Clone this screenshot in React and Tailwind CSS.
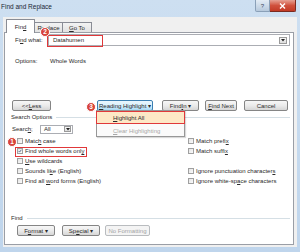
import React from "react";

const U = ({ children }) => <span className="underline underline-offset-[1px] decoration-[0.5px]">{children}</span>;

function Btn({ children, className = "" }) {
  return (
    <div className={"h-[11px] flex items-center justify-center rounded-[2px] border border-[#858585] bg-linear-to-b from-[#f7f7f7] via-[#ebebeb] to-[#d6d6d6] text-[6px] text-[#2a2a2a] " + className}>
      {children}
    </div>
  );
}

function Check({ checked, label }) {
  return (
    <div className="h-[10px] flex items-center">
      <div className="w-[6px] h-[6px] border border-[#a0a0a0] bg-linear-to-br from-[#e4e4e4] to-[#fbfbfb] flex items-center justify-center">
        {checked && (
          <svg width="6" height="6" viewBox="0 0 6 6">
            <path d="M1 3.2 L2.4 4.6 L5 1.2" stroke="#1f3b6b" strokeWidth="1" fill="none" />
          </svg>
        )}
      </div>
      <div className="ml-[2px] whitespace-nowrap">{label}</div>
    </div>
  );
}

function Badge({ n, className }) {
  return (
    <div className={"absolute rounded-full bg-[#d8433b] border border-white text-white text-[6.5px] font-bold flex items-center justify-center " + className}>
      {n}
    </div>
  );
}

export default function App() {
  return (
    <div className="relative w-[300px] h-[252px] overflow-hidden bg-linear-to-b from-[#cddff1] to-[#bfd5ec] font-['Liberation_Sans',Arial,sans-serif] text-[6px] leading-none text-[#2a2a2a]">
      {/* Title bar */}
      <div className="h-[17px] flex items-start">
        <div className="pl-[1px] pt-[3px] text-[6.5px] leading-[8px] text-[#1b2635]">Find and Replace</div>
        <div className="ml-auto mr-[4px] flex">
          <div className="w-[15px] h-[12px] rounded-bl-[2px] border border-[#8aa0b8] border-t-0 bg-linear-to-b from-[#e3ecf5] to-[#b7c9dc] flex items-center justify-center text-[6px] text-[#3a4a5c]">?</div>
          <div className="w-[26px] h-[12px] rounded-br-[2px] border border-[#7a2a20] border-t-0 border-l-0 bg-linear-to-b from-[#e5a093] via-[#d0513d] to-[#c23a25] flex items-center justify-center">
            <svg width="7" height="6" viewBox="0 0 7 6">
              <path d="M1 0.5 L6 5.5 M6 0.5 L1 5.5" stroke="white" strokeWidth="1.4" />
            </svg>
          </div>
        </div>
      </div>

      {/* Body */}
      <div className="mx-[3px] h-[230px] bg-[#f0f0f0] flex flex-col">
        {/* Tabs */}
        <div className="h-[15px] flex items-end pl-[3px]">
          <div className="relative z-10 -mb-px w-[29px] h-[14px] bg-white border border-b-0 border-[#898c95] rounded-t-[1px] flex items-center justify-center pt-[1px]">
            Fin<U>d</U>
          </div>
          <div className="w-[28px] h-[10px] bg-linear-to-b from-[#f3f3f3] to-[#e2e2e2] border border-b-0 border-l-0 border-[#898c95] flex items-center justify-center">
            Re<U>p</U>lace
          </div>
          <div className="w-[29px] h-[10px] bg-linear-to-b from-[#f3f3f3] to-[#e2e2e2] border border-b-0 border-l-0 border-[#898c95] flex items-center justify-center">
            <U>G</U>o To
          </div>
        </div>

        {/* Panel */}
        <div className="ml-[1px] mr-[3px] h-[213px] bg-white border border-[#9a9ea6] flex flex-col">
          {/* Find what */}
          <div className="mt-[1px] h-[12px] flex items-center pl-[10px]">
            <div className="w-[33px]">Fi<U>n</U>d what:</div>
            <div className="w-[242px] h-[12px] border border-[#abadb3] flex items-center pl-[4px]">
              <span>Datahumen</span>
              <div className="ml-auto mr-[2px] w-[8px] h-[7px] border border-[#9a9a9a] bg-linear-to-b from-[#f6f6f6] to-[#dedede] flex items-center justify-center">
                <svg width="4" height="3" viewBox="0 0 4 3"><path d="M0 0 L4 0 L2 2.5 Z" fill="#222" /></svg>
              </div>
            </div>
          </div>

          {/* Options */}
          <div className="mt-[11px] h-[8px] flex items-center pl-[10px]">
            <div className="w-[35px]">Options:</div>
            <div>Whole Words</div>
          </div>

          {/* Buttons */}
          <div className="mt-[35px] h-[11px] flex pl-[7px]">
            <Btn className="w-[39px]">&lt;&lt; <U>L</U>ess</Btn>
            <div className="ml-[46px] w-[56px] h-[11px] flex items-center justify-center rounded-[2px] border border-[#3c7fb1] bg-linear-to-b from-[#eaf6fd] via-[#d9f0fc] to-[#a7d9f5]">
              <U>R</U>eading Highlight ▾
            </div>
            <Btn className="ml-[9px] w-[37px]">Find <U>I</U>n ▾</Btn>
            <Btn className="ml-[6px] w-[32px]"><U>F</U>ind Next</Btn>
            <Btn className="ml-[7px] w-[44px]">Cancel</Btn>
          </div>

          {/* Search Options */}
          <div className="mt-[2px] h-[8px] flex items-center pl-[6px]">
            <div className="whitespace-nowrap">Search Options</div>
            <div className="flex-1 ml-[4px] mr-[3px] h-px bg-[#d5dfe5]" />
          </div>

          {/* Search */}
          <div className="mt-[3px] h-[10px] flex items-center pl-[7px]">
            <div className="w-[28px]">Searc<U>h</U>;</div>
            <div className="w-[33px] h-[9px] border border-[#abadb3] flex items-center pl-[3px]">
              <span>All</span>
              <div className="ml-auto mr-[1px] w-[7px] h-[6px] border border-[#9a9a9a] bg-linear-to-b from-[#f6f6f6] to-[#dedede] flex items-center justify-center">
                <svg width="4" height="3" viewBox="0 0 4 3"><path d="M0 0 L4 0 L2 2.5 Z" fill="#222" /></svg>
              </div>
            </div>
          </div>

          {/* Checkboxes */}
          <div className="mt-[2px] flex">
            <div className="w-[183px] pl-[12px] flex flex-col">
              <Check label={<>Matc<U>h</U> case</>} />
              <Check checked label={<>Find whole words onl<U>y</U></>} />
              <Check label={<><U>U</U>se wildcards</>} />
              <Check label={<>Sounds li<U>k</U>e (English)</>} />
              <Check label={<>Find all <U>w</U>ord forms (English)</>} />
            </div>
            <div className="flex flex-col">
              <Check label={<>Match prefi<U>x</U></>} />
              <Check label={<>Match suffi<U>x</U></>} />
              <div className="h-[10px]" />
              <Check label={<>Ignore punctuation character<U>s</U></>} />
              <Check label={<>Ignore white-sp<U>a</U>ce characters</>} />
            </div>
          </div>

          {/* Find section */}
          <div className="mt-[28px] h-[8px] flex items-center pl-[6px]">
            <div>Find</div>
            <div className="flex-1 ml-[4px] mr-[3px] h-px bg-[#d5dfe5]" />
          </div>
          <div className="mt-[3px] h-[11px] flex pl-[12px]">
            <Btn className="w-[38px]">F<U>o</U>rmat ▾</Btn>
            <Btn className="ml-[7px] w-[38px]">Sp<U>e</U>cial ▾</Btn>
            <div className="ml-[5px] w-[45px] h-[11px] flex items-center justify-center rounded-[2px] border border-[#b9bcbf] bg-[#f4f4f4] text-[#a3a3a3]">
              No Formatting
            </div>
          </div>
        </div>
      </div>

      {/* Dropdown menu */}
      <div className="absolute left-[96px] top-[110px] w-[89px] h-[27px] bg-[#fafafa] border border-[#979797] shadow-[1px_1px_1px_rgba(0,0,0,0.15)]">
        <div className="mt-[1px] h-[12px] bg-[#fde8c6] flex items-center pl-[16px]">
          <U>H</U>ighlight All
        </div>
        <div className="mt-[2px] h-[10px] flex items-center pl-[16px] text-[#a8a8a8]">
          <U>C</U>lear Highlighting
        </div>
      </div>

      {/* Annotation boxes */}
      <div className="absolute left-[47px] top-[35px] w-[56px] h-[12px] border border-[#e0383a]" />
      <div className="absolute left-[96px] top-[111px] w-[89px] h-[13px] border border-[#e0383a]" />
      <div className="absolute left-[15px] top-[147px] w-[72px] h-[10px] border border-[#e0383a]" />

      {/* Badges */}
      <Badge n="2" className="left-[40px] top-[27px] w-[10px] h-[10px]" />
      <Badge n="3" className="left-[86px] top-[102px] w-[10px] h-[10px]" />
      <Badge n="1" className="left-[7px] top-[137px] w-[10px] h-[10px]" />
    </div>
  );
}
